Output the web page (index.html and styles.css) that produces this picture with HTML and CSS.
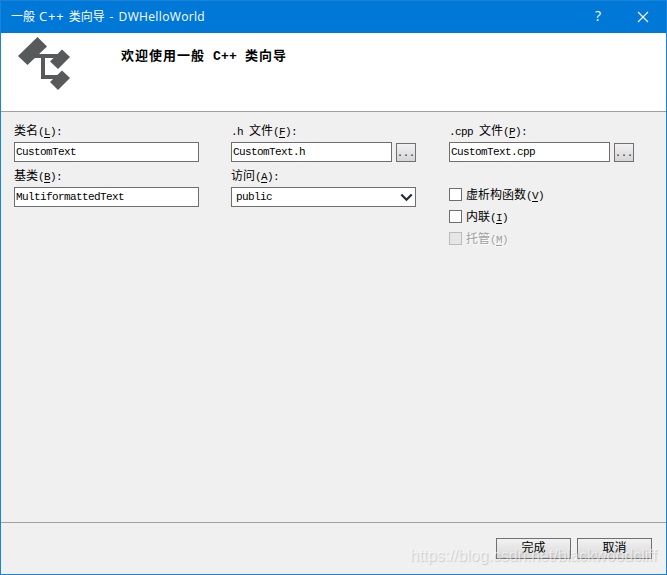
FILE: index.html
```html
<!DOCTYPE html>
<html lang="zh-CN">
<head>
<meta charset="utf-8">
<title>一般 C++ 类向导 - DWHelloWorld</title>
<link rel="stylesheet" href="styles.css">
</head>
<body>
<div class="window">
  <header class="titlebar">
    <span class="title">一般 <span class="title-latin plus">C++</span> 类向导<span class="title-latin"> - DWHelloWorld</span></span>
    <span class="help">?</span>
    <svg class="close" width="12" height="12" viewBox="0 0 12 12"><path d="M1 1l10 10M11 1L1 11" fill="none" stroke="#fff" stroke-width="1.1"/></svg>
  </header>
  <section class="banner">
    <svg class="logo" width="54" height="56" viewBox="0 0 54 56">
      <path d="M16 20H45M26 21V41H45" fill="none" stroke="#58595b" stroke-width="4"/>
      <path d="M20.5 1L30 10.5 10.5 29 1 20Z" fill="#58595b"/>
      <path d="M45 13.5L53 21 41 33 33 25.5Z" fill="#58595b"/>
      <path d="M45 34.5L53 42 41 54 33 46Z" fill="#58595b"/>
    </svg>
    <h1>欢迎使用一般<b> C++ </b>类向导</h1>
  </section>
  <main class="form">
    <div class="column">
      <label>类名<i>(<u>L</u>):</i></label>
      <div class="row"><div class="input">CustomText</div></div>
      <label>基类<i>(<u>B</u>):</i></label>
      <div class="row"><div class="input">MultiformattedText</div></div>
    </div>
    <div class="column">
      <label><i>.h </i>文件<i>(<u>F</u>):</i></label>
      <div class="row"><div class="input">CustomText.h</div><button class="browse">...</button></div>
      <label>访问<i>(<u>A</u>):</i></label>
      <div class="row"><div class="input select">public<svg width="13" height="9" viewBox="0 0 13 9"><path d="M1.3 1.5L6.5 6.7 11.7 1.5" fill="none" stroke="#222b3a" stroke-width="2.2"/></svg></div></div>
    </div>
    <div class="column">
      <label><i>.cpp </i>文件<i>(<u>P</u>):</i></label>
      <div class="row"><div class="input">CustomText.cpp</div><button class="browse">...</button></div>
      <div class="checks">
        <div class="check"><span class="box"></span><span class="text">虚析构函数<i>(<u>V</u>)</i></span></div>
        <div class="check"><span class="box"></span><span class="text">内联<i>(<u>I</u>)</i></span></div>
        <div class="check disabled"><span class="box"></span><span class="text">托管<i>(<u>M</u>)</i></span></div>
      </div>
    </div>
  </main>
  <footer class="footer">
    <button class="action">完成</button>
    <button class="action">取消</button>
    <span class="watermark">https://blog.csdn.net/blackwoodcliff</span>
  </footer>
</div>
</body>
</html>
```
FILE: styles.css
```css
* { box-sizing: border-box; }
body {
  margin: 0;
  font: 12px/18px "Noto Sans CJK SC", sans-serif;
  color: #000;
}
.window {
  width: 667px;
  height: 575px;
  display: flex;
  flex-direction: column;
  border: 1px solid #1883d7;
  background: #f0f0f0;
}
.titlebar {
  height: 32px;
  flex: none;
  display: flex;
  align-items: center;
  padding: 0 17px 0 10px;
  background: #0078d7;
  color: #fff;
}
.title { flex: 1; white-space: pre; padding-bottom: 1px; word-spacing: 1.4px; }
.title-latin { font-family: "Open Sans", sans-serif; font-size: 12px; letter-spacing: 0.35px; }
.plus { font-size: 13px; letter-spacing: 0.8px; }
.help { font: 14px/18px "Open Sans", sans-serif; margin: -2px 36px 0 0; }
.close { margin-top: -1px; }
.banner {
  height: 79px;
  flex: none;
  display: flex;
  padding: 3px 0 0 16px;
  background: #fff;
  border-bottom: 1px solid #a0a0a0;
}
h1 {
  margin: 10px 0 0 50px;
  font-size: 13px;
  line-height: 18px;
  font-weight: bold;
  letter-spacing: 1px;
  white-space: pre;
}
h1 b {
  font: bold 13px/18px "Liberation Mono", monospace;
  letter-spacing: 0.2px;
}
.form {
  flex: 1;
  display: grid;
  grid-template-columns: 217px 218px 185px;
  align-content: start;
  padding: 9px 0 0 13px;
}
label { display: block; height: 21px; line-height: 17px; white-space: pre; }
i, .input, .browse {
  font: normal 11px/18px "Liberation Mono", monospace;
  letter-spacing: -0.6px;
}
label i, .text i { line-height: 1; }
u { text-decoration: underline; text-underline-offset: 2px; }
.row { display: flex; width: 185px; height: 20px; margin-bottom: 4px; }
.input {
  flex: 1;
  height: 20px;
  padding: 0 1px;
  background: #fff;
  border: 1px solid #6e6e6e;
}
.select {
  display: flex;
  align-items: center;
  justify-content: space-between;
  padding: 0 2px 0 4px;
}
.browse {
  width: 20px;
  height: 19px;
  margin: 1px 0 0 4px;
  padding: 3px 0 0;
  font-size: 10px;
  letter-spacing: 0;
  line-height: 14px;
  color: #222;
  border: 1px solid #707070;
  background: linear-gradient(#f2f2f2, #d5d5d5);
}
.checks { margin-top: 21px; }
.check { display: flex; align-items: center; gap: 4px; height: 22px; }
.box { width: 13px; height: 13px; background: #fff; border: 1px solid #6e6e6e; }
.disabled { color: #a0a0a0; text-shadow: 1px 1px #fff; }
.disabled .box { background: #e6e6e6; border-color: #bcbcbc; }
.footer {
  position: relative;
  height: 52px;
  flex: none;
  display: flex;
  justify-content: flex-end;
  gap: 6px;
  padding: 15px 14px 0 0;
  border-top: 1px solid #a0a0a0;
}
.action {
  width: 75px;
  height: 21px;
  padding: 0 0 3px;
  font: 12px/16px "Noto Sans CJK SC", sans-serif;
  color: #000;
  border: 1px solid #707070;
  background: linear-gradient(#f2f2f2, #d8d8d8);
}
.watermark {
  position: absolute;
  left: 409px;
  top: 23px;
  font: 16px/20px "Liberation Sans", sans-serif;
  color: rgba(255, 255, 255, 0.55);
  text-shadow: 1px 1px 1px rgba(120, 120, 120, 0.3);
  white-space: nowrap;
}
```
